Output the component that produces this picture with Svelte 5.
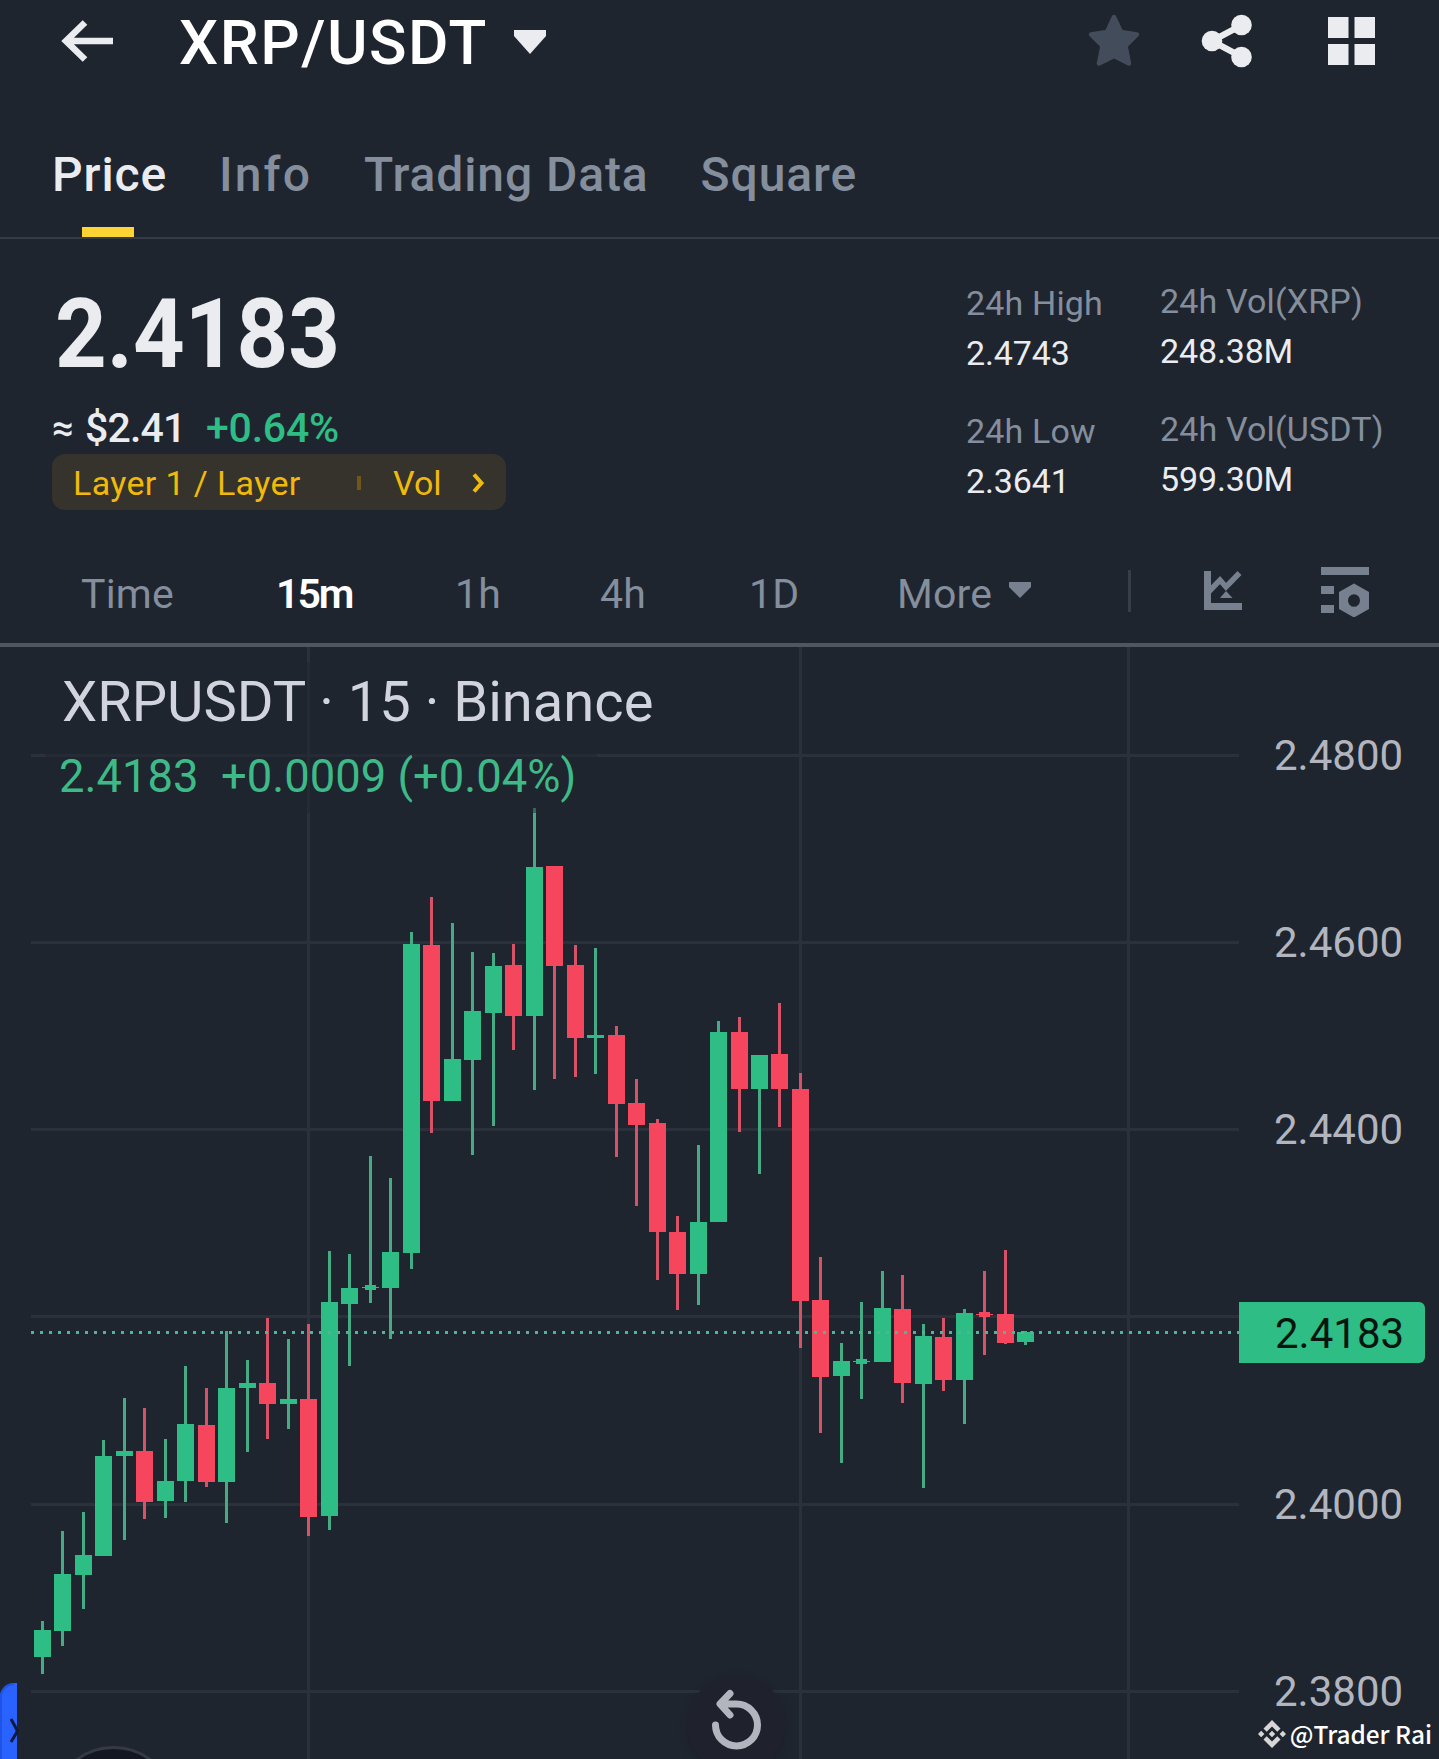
<script lang="ts">
  type Candle = [high: number, top: number, bottom: number, low: number, side: "up" | "down"];

  const tabs = [
    { id: "price", name: "Price" },
    { id: "info", name: "Info" },
    { id: "data", name: "Trading Data" },
    { id: "square", name: "Square" },
  ];

  const stats = [
    [
      { label: "24h High", value: "2.4743" },
      { label: "24h Low", value: "2.3641" },
    ],
    [
      { label: "24h Vol(XRP)", value: "248.38M" },
      { label: "24h Vol(USDT)", value: "599.30M" },
    ],
  ];

  const intervals = [
    { id: "time", name: "Time" },
    { id: "15m", name: "15m" },
    { id: "1h", name: "1h" },
    { id: "4h", name: "4h" },
    { id: "1d", name: "1D" },
  ];

  let activeTab = $state("price");
  let activeInterval = $state("15m");

  // the chart's viewBox starts right below the interval bar
  const chartTop = 647;
  const scale = [
    { price: "2.4800", y: 755.5 },
    { price: "2.4600", y: 942.5 },
    { price: "2.4400", y: 1129.5 },
    { price: "", y: 1316.5 },
    { price: "2.4000", y: 1504.5 },
    { price: "2.3800", y: 1691.5 },
  ];
  const timeLines = [308.5, 800.5, 1128.5];

  const candles: Candle[] = [
    [1621, 1630, 1657, 1674, "up"],
    [1531, 1574, 1631, 1646, "up"],
    [1512, 1555, 1575, 1609, "up"],
    [1440, 1456, 1556, 1556, "up"],
    [1398, 1451, 1456, 1540, "up"],
    [1408, 1451, 1502, 1519, "down"],
    [1439, 1481, 1501, 1518, "up"],
    [1366, 1424, 1481, 1502, "up"],
    [1388, 1425, 1482, 1487, "down"],
    [1331, 1388, 1482, 1523, "up"],
    [1360, 1383, 1388, 1452, "up"],
    [1318, 1383, 1404, 1439, "down"],
    [1339, 1399, 1404, 1429, "up"],
    [1324, 1399, 1517, 1536, "down"],
    [1251, 1302, 1516, 1530, "up"],
    [1254, 1288, 1304, 1366, "up"],
    [1156, 1287, 1288, 1303, "up"],
    [1178, 1252, 1288, 1339, "up"],
    [932, 944, 1253, 1269, "up"],
    [897, 945, 1101, 1133, "down"],
    [923, 1059, 1101, 1101, "up"],
    [952, 1011, 1060, 1155, "up"],
    [953, 966, 1013, 1126, "up"],
    [944, 965, 1016, 1050, "down"],
    [808, 867, 1016, 1090, "up"],
    [866, 866, 966, 1079, "down"],
    [945, 965, 1038, 1077, "down"],
    [948, 1035, 1038, 1074, "up"],
    [1026, 1035, 1104, 1157, "down"],
    [1079, 1103, 1125, 1206, "down"],
    [1119, 1123, 1232, 1280, "down"],
    [1216, 1232, 1274, 1310, "down"],
    [1145, 1222, 1274, 1305, "up"],
    [1021, 1032, 1222, 1222, "up"],
    [1017, 1032, 1089, 1132, "down"],
    [1055, 1055, 1089, 1174, "up"],
    [1003, 1054, 1089, 1127, "down"],
    [1073, 1089, 1301, 1348, "down"],
    [1257, 1300, 1377, 1433, "down"],
    [1343, 1361, 1376, 1463, "up"],
    [1302, 1361, 1362, 1399, "up"],
    [1271, 1308, 1362, 1362, "up"],
    [1275, 1309, 1383, 1403, "down"],
    [1324, 1336, 1384, 1488, "up"],
    [1318, 1337, 1380, 1391, "down"],
    [1309, 1313, 1380, 1424, "up"],
    [1271, 1314, 1315, 1355, "down"],
    [1250, 1314, 1343, 1344, "down"],
    [1331, 1332, 1342, 1345, "up"],
  ];

  function candleX(index: number): number {
    return Math.round(34 + index * 20.486);
  }
</script>

<div class="screen">
  <header class="header">
    <button class="back" aria-label="Back">
      <svg width="52" height="42" viewBox="0 0 52 42">
        <path d="M24 2.5 5 21l19 18.5M4 21h48" fill="none" stroke="#eaecef" stroke-width="6.6" />
      </svg>
    </button>
    <h1 class="pair">XRP/USDT</h1>
    <svg class="caret" width="32" height="24" viewBox="0 0 32 24">
      <path d="M0 0h32v6L16 24 0 6z" fill="#eaecef" />
    </svg>
    <div class="actions">
      <svg class="star" width="54" height="54" viewBox="0 0 54 54">
        <path
          d="M27 3l7 15 16 2.500-11.500 11.500 3.500 17.500L27 42 12 49.500l3.500-17.500L4 20.500 20 18z"
          fill="#434c5a"
          stroke="#434c5a"
          stroke-width="4.500"
          stroke-linejoin="round"
        />
      </svg>
      <svg class="share" width="52" height="54" viewBox="0 0 52 54">
        <path d="M41 11 11 27l30 16" fill="none" stroke="#eaecef" stroke-width="6.500" />
        <circle cx="40.500" cy="11" r="10.300" fill="#eaecef" />
        <circle cx="11" cy="27" r="10.300" fill="#eaecef" />
        <circle cx="40.500" cy="43" r="10.300" fill="#eaecef" />
      </svg>
      <svg class="grid-icon" width="47" height="48" viewBox="0 0 47 48">
        <path d="M0 0h20.500v21H0zM26.500 0H47v21H26.500zM0 27h20.500v21H0zM26.500 27H47v21H26.500z" fill="#eaecef" />
      </svg>
    </div>
  </header>

  <nav class="tabs">
    {#each tabs as tab (tab.id)}
      <button
        class="tab"
        class:is-active={activeTab === tab.id}
        class:is-info={tab.id === "info"}
        onclick={() => (activeTab = tab.id)}
      >
        {tab.name}
      </button>
    {/each}
  </nav>

  <section class="summary">
    <div class="quote">
      <div class="last-price">2.4183</div>
      <div class="fiat">
        <span class="approx">≈</span>
        <span class="usd">$2.41</span>
        <span class="change">+0.64%</span>
      </div>
      <div class="badge">
        <span class="badge-text">Layer 1 / Layer</span>
        <span class="badge-divider"></span>
        <span>Vol</span>
        <svg class="chevron" width="13" height="20" viewBox="0 0 13 20">
          <path d="M2 1.500l7.500 8.500L2 18.500" fill="none" stroke="#f0b90b" stroke-width="4" />
        </svg>
      </div>
    </div>
    <div class="stats">
      {#each stats as column}
        <div class="stat-column">
          {#each column as stat (stat.label)}
            <div class="stat">
              <div class="stat-label">{stat.label}</div>
              <div class="stat-value">{stat.value}</div>
            </div>
          {/each}
        </div>
      {/each}
    </div>
  </section>

  <div class="intervals">
    {#each intervals as interval (interval.id)}
      <button
        class="interval"
        class:is-active={activeInterval === interval.id}
        onclick={() => (activeInterval = interval.id)}
      >
        {interval.name}
      </button>
    {/each}
    <button class="more">
      More
      <svg class="more-caret" width="22" height="16" viewBox="0 0 22 16">
        <path d="M0 0h22v5L11 16 0 5z" fill="#76808f" />
      </svg>
    </button>
    <span class="divider"></span>
    <svg class="depth" width="38" height="40" viewBox="0 0 38 40">
      <path d="M0 0h7v32h31v7H0z" fill="#76808f" />
      <path d="M4 21.500 16 9l6 7L35.500 2" fill="none" stroke="#76808f" stroke-width="5.500" />
      <path d="M22 20l6.500 7H16z" fill="#76808f" />
    </svg>
    <svg class="settings" width="48" height="50" viewBox="0 0 48 50">
      <path d="M0 0h48v8H0zM0 19h13v8H0zM0 38h13v8H0z" fill="#76808f" />
      <path
        d="M33 16.500l15 8.500v17l-15 8.500L18 42V25zM33 27.200a6 6.300 0 1 0 0 12.600 6 6.300 0 1 0 0-12.600z"
        fill="#76808f"
        fill-rule="evenodd"
      />
    </svg>
  </div>

  <div class="chart">
    <svg width="1439" height="1112" viewBox="0 {chartTop} 1439 1112">
      {#each scale as line}
        <path class="grid-line" d="M31 {line.y}H1239" />
      {/each}
      {#each timeLines as x}
        <path class="grid-line" d="M{x} {chartTop}V1759" />
      {/each}

      {#each candles as [high, top, bottom, low, side], i}
        {@const x = candleX(i)}
        <g class={side}>
          <rect class="wick" x={x + 7} y={high} width="3" height={low - high} />
          <rect class="body" {x} y={top} width="17" height={bottom - top} />
          {#if bottom - top === 1}
            <rect class="body" x={x + 3} y={top - 2} width="11" height="5" />
          {/if}
        </g>
      {/each}

      <path class="price-line" d="M31 1332.500H1239" />
      <path d="M1239 1302h180a6 6 0 0 1 6 6v49a6 6 0 0 1-6 6h-180z" fill="#2ebd85" />

      <g class="scale">
        {#each scale as line}
          <text x="1274" y={line.y + 14.5}>{line.price}</text>
        {/each}
        <text class="current" x="1275" y="1348">2.4183</text>
      </g>

      <!-- dims the chart under the legend -->
      <rect x="45" y="662" width="552" height="151" fill="#1f252f" opacity="0.5" />
      <text class="symbol" x="62" y="721">XRPUSDT · 15 · Binance</text>
      <text class="delta" x="59" y="792">2.4183&nbsp; +0.0009 (+0.04%)</text>

      <!-- side panel handle, cut off by the screen edge -->
      <path d="M17 1683h-3a14 14 0 0 0-14 14v62h17z" fill="#2962ff" />
      <path d="M14 1684a13 13 0 0 0-13 13v62" fill="none" stroke="#1e53e5" stroke-width="2" />
      <path d="M11 1719l6 11v2l-6 10" fill="none" stroke="#0b1a40" stroke-width="3" />

      <circle cx="113.500" cy="1809" r="61.500" fill="#131722" stroke="#343943" stroke-width="3" />

      <circle class="reset" cx="736.500" cy="1724" r="49" />
      <path
        d="M715.500 1725a21 21 0 1 0 21-21H721M730 1693.500l-10 10.500 10 11"
        fill="none"
        stroke="#b2b5be"
        stroke-width="7"
        stroke-linecap="round"
        stroke-linejoin="round"
      />
    </svg>

    <div class="watermark">
      <svg width="28" height="28" viewBox="0 0 28 28">
        <g fill="#d6d6d6">
          <path d="M14 0l8.500 8.500-3.200 3.200L14 6.400l-5.300 5.300-3.200-3.200zM14 28l8.500-8.500-3.200-3.200-5.300 5.300-5.300-5.300-3.200 3.200z" />
          <path d="M14 10.800l3.200 3.200-3.200 3.200-3.200-3.200zM3.200 10.800 6.400 14l-3.200 3.200L0 14zM24.800 10.800 28 14l-3.200 3.200-3.200-3.200z" />
        </g>
      </svg>
      <span>@Trader Rai</span>
    </div>
  </div>
</div>

<style>
  :global(body) {
    margin: 0;
    background: #1f252f;
  }

  .screen {
    width: 1439px;
    height: 1759px;
    overflow: hidden;
    display: flex;
    flex-direction: column;
    background: #1f252f;
    color: #eaecef;
    font-family: Roboto, "Liberation Sans", sans-serif;
  }

  button {
    appearance: none;
    margin: 0;
    padding: 0;
    border: none;
    background: transparent;
    color: inherit;
    font: inherit;
    text-align: left;
    white-space: nowrap;
  }

  svg {
    display: block;
    flex: none;
  }

  .header {
    display: flex;
    align-items: center;
    height: 85px;
    padding: 0 64px 0 61px;
  }

  .back {
    width: 118px;
    margin-top: -3px;
  }

  .pair {
    width: 335px;
    margin: 0;
    padding-top: 1px;
    color: #fff;
    font-size: 62px;
    font-weight: 500;
    line-height: 84px;
    letter-spacing: 1.5px;
  }

  .caret {
    margin-top: -1px;
  }

  .actions {
    display: flex;
    align-items: center;
    margin: -4px 0 0 auto;
  }

  .share {
    margin: 0 75px 0 60px;
  }

  .tabs {
    display: flex;
    gap: 52px;
    height: 152px;
    padding-left: 52px;
    border-bottom: 2px solid #333b47;
  }

  .tab {
    position: relative;
    padding-top: 26px;
    color: #848e9c;
    font-size: 48px;
    font-weight: 500;
    letter-spacing: 0.9px;
  }

  .tab.is-info {
    letter-spacing: 2.1px;
  }

  .tab.is-active {
    color: #eaecef;
  }

  .tab.is-active::after {
    content: "";
    position: absolute;
    left: 30px;
    bottom: 0;
    width: 52px;
    height: 10px;
    background: #fcd535;
  }

  .summary {
    display: flex;
    justify-content: space-between;
    height: 301px;
    padding: 0 30px 0 52px;
  }

  .quote {
    padding-top: 60px;
  }

  .last-price {
    margin-left: 3px;
    font-size: 97px;
    font-weight: 700;
    line-height: 70px;
    transform: scaleX(0.93);
    transform-origin: 0 50%;
  }

  .fiat {
    display: flex;
    align-items: center;
    margin-top: 39px;
    font-size: 41px;
    font-weight: 500;
    line-height: 40px;
  }

  .approx {
    width: 33px;
    font-size: 38px;
  }

  .usd {
    width: 121px;
    letter-spacing: -0.8px;
  }

  .change {
    color: #2ebd85;
    letter-spacing: -0.2px;
  }

  .badge {
    display: flex;
    align-items: center;
    box-sizing: border-box;
    width: 454px;
    height: 56px;
    margin-top: 6px;
    padding: 2px 21px 0;
    border-radius: 13px;
    background: #35332b;
    color: #f0b90b;
    font-size: 34px;
  }

  .badge-text {
    width: 284px;
    letter-spacing: 0.35px;
  }

  .badge-divider {
    width: 4px;
    height: 14px;
    margin-right: 32px;
    background: #6e5719;
  }

  .chevron {
    margin-left: auto;
  }

  .stats {
    display: grid;
    grid-template-columns: 194px 249px;
    padding-top: 37px;
  }

  .stat-column {
    display: flex;
    flex-direction: column;
    gap: 28px;
  }

  .stat-column:first-child {
    padding-top: 2px;
  }

  .stat {
    font-size: 34px;
    line-height: 50px;
    white-space: nowrap;
  }

  .stat-label {
    color: #848e9c;
    letter-spacing: 0.15px;
  }

  .stat-value {
    letter-spacing: -0.15px;
  }

  .intervals {
    display: grid;
    grid-template-columns: 195px 179px 145px 149px 148px 231px 76px 117px 48px;
    align-items: center;
    height: 103px;
    padding-left: 81px;
    border-bottom: 4px solid #50565f;
    color: #848e9c;
    font-size: 41px;
  }

  .interval,
  .more {
    line-height: 50px;
    padding-top: 5px;
    letter-spacing: 0.2px;
  }

  .interval.is-active {
    color: #fff;
    font-weight: 600;
    letter-spacing: -2px;
  }

  .more {
    display: flex;
    align-items: center;
    gap: 17px;
  }

  .more-caret {
    margin-top: -8px;
  }

  .divider {
    width: 3px;
    height: 42px;
    margin-top: -2px;
    background: #373e49;
  }

  .depth {
    margin-top: -2px;
  }

  .chart {
    position: relative;
    height: 1112px;
  }

  .grid-line {
    stroke: #2b313b;
    stroke-width: 3;
  }

  .up .body {
    fill: #2ebd85;
  }

  .up .wick {
    fill: #45ab84;
  }

  .down .body {
    fill: #f6465d;
  }

  .down .wick {
    fill: #d55267;
  }

  .price-line {
    stroke: #52b592;
    stroke-width: 3;
    stroke-dasharray: 3 6;
  }

  .scale {
    fill: #b2b5be;
    font-size: 42px;
  }

  .current {
    fill: #07150f;
  }

  .symbol {
    fill: #d1d4dc;
    font-size: 56.1px;
  }

  .delta {
    fill: #3dba87;
    font-size: 45.4px;
  }

  .reset {
    fill: #1f222d;
    filter: drop-shadow(0 3px 4px rgba(0, 0, 0, 0.15));
  }

  .watermark {
    position: absolute;
    right: 7px;
    bottom: 11px;
    display: flex;
    align-items: center;
    gap: 4px;
    color: #fff;
    font-family: "Noto Sans CJK SC", "Noto Sans", sans-serif;
    font-size: 24.4px;
    font-weight: 500;
    line-height: 28px;
    white-space: nowrap;
  }
</style>
